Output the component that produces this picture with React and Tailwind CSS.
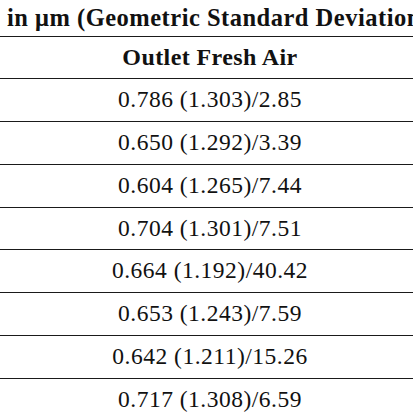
export default function App() {
  const rows = [
    "0.786 (1.303)/2.85",
    "0.650 (1.292)/3.39",
    "0.604 (1.265)/7.44",
    "0.704 (1.301)/7.51",
    "0.664 (1.192)/40.42",
    "0.653 (1.243)/7.59",
    "0.642 (1.211)/15.26",
    "0.717 (1.308)/6.59",
  ];
  return (
    <div className="w-[413px] h-[413px] overflow-hidden bg-white text-[#111] font-['Liberation_Serif','Times_New_Roman',serif]">
      <div className="w-[420px]">
        <div className="h-[36.5px] border-b-[1.5px] border-[#1a1a1a] flex items-center pl-[7px] whitespace-nowrap font-bold text-[24.5px] tracking-[0.5px] leading-none">
          in μm (Geometric Standard Deviation)
        </div>
        <div className="h-[42.75px] border-b-[1.5px] border-[#1a1a1a] flex items-center justify-center font-bold text-[24px] tracking-[0.4px] leading-none">
          Outlet Fresh Air
        </div>
        {rows.map((r, i) => (
          <div key={i} className="h-[42.75px] border-b-[1.5px] border-[#1a1a1a] flex items-center justify-center text-[23.5px] tracking-[0.5px] leading-none">
            {r}
          </div>
        ))}
      </div>
    </div>
  );
}
